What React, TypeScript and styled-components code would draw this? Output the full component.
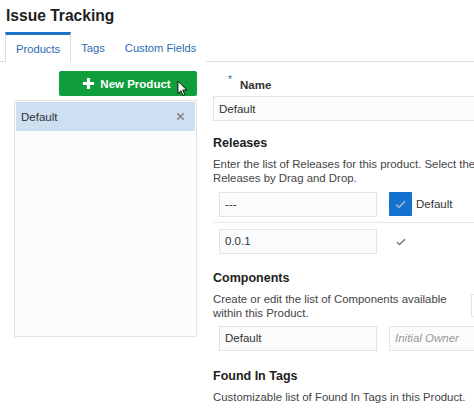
import React from 'react';
import styled, { createGlobalStyle } from 'styled-components';

const GlobalStyle = createGlobalStyle`
  html, body {
    margin: 0;
    padding: 0;
    background: #ffffff;
  }
  body {
    font-family: 'Liberation Sans', Arial, sans-serif;
    color: #333333;
  }
`;

const Page = () => {
  return (
    <Layout>
      <GlobalStyle />
      <Title>Issue Tracking</Title>

      <TabBar>
        <Tab $active>Products</Tab>
        <Tab>Tags</Tab>
        <Tab>Custom Fields</Tab>
      </TabBar>

      <Body>
        <LeftColumn>
          <NewButton>
            <PlusIcon viewBox="0 0 14 14">
              <path d="M7 1v12M1 7h12" stroke="#fff" strokeWidth="3.4" />
            </PlusIcon>
            New Product
            <Cursor viewBox="0 0 12 18">
              <path
                d="M1 1v13.5l3.2-3 2.2 5 2-0.9-2.1-4.9h4.4z"
                fill="#fff"
                stroke="#000"
                strokeWidth="1"
                strokeLinejoin="round"
              />
            </Cursor>
          </NewButton>

          <ProductList>
            <ProductItem $selected>
              <span>Default</span>
              <CloseIcon viewBox="0 0 10 10">
                <path d="M1.5 1.5l7 7M8.5 1.5l-7 7" stroke="#8a8a8a" strokeWidth="1.8" />
              </CloseIcon>
            </ProductItem>
          </ProductList>
        </LeftColumn>

        <RightColumn>
          <FieldLabel>
            <Required>*</Required>
            Name
          </FieldLabel>
          <TextInput $width="100%" $top={4}>
            Default
          </TextInput>

          <SectionTitle $top={14}>Releases</SectionTitle>
          <Description>
            <Line>Enter the list of Releases for this product. Select the</Line>
            <Line>Releases by Drag and Drop.</Line>
          </Description>

          <ReleaseRow $divider>
            <TextInput $width="158px">---</TextInput>
            <CheckBox>
              <svg viewBox="0 0 12 10" width="11" height="9">
                <path d="M1 5.2l3.2 3L11 1.5" fill="none" stroke="#9fb4cf" strokeWidth="1.7" />
              </svg>
            </CheckBox>
            <CheckText>Default</CheckText>
          </ReleaseRow>

          <ReleaseRow>
            <TextInput $width="158px">0.0.1</TextInput>
            <CheckSlot>
              <svg viewBox="0 0 12 10" width="10" height="8">
                <path d="M1 5.2l3.2 3L11 1.5" fill="none" stroke="#777" strokeWidth="1.8" />
              </svg>
            </CheckSlot>
          </ReleaseRow>

          <SectionTitle $top={17}>Components</SectionTitle>
          <DescriptionRow>
            <Description $width="250px">
              <Line>Create or edit the list of Components available</Line>
              <Line>within this Product.</Line>
            </Description>
            <EdgeBox />
          </DescriptionRow>

          <ReleaseRow>
            <TextInput $width="158px">Default</TextInput>
            <TextInput $width="110px" $placeholder>
              Initial Owner
            </TextInput>
          </ReleaseRow>

          <SectionTitle $top={18}>Found In Tags</SectionTitle>
          <Description>
            <Line>Customizable list of Found In Tags in this Product.</Line>
          </Description>
        </RightColumn>
      </Body>
    </Layout>
  );
};

const Layout = styled.div`
  width: 474px;
  height: 415px;
  overflow: hidden;
  display: flex;
  flex-direction: column;
`;

const Title = styled.h1`
  margin: 0;
  padding: 6px 0 0 6px;
  font-size: 15.6px;
  line-height: 20px;
  font-weight: 700;
  color: #222222;
`;

const TabBar = styled.div`
  display: flex;
  margin-top: 6px;
  padding-left: 5px;
  height: 29px;
  border-bottom: 1px solid #dddddd;
`;

const Tab = styled.div<{ $active?: boolean }>`
  display: flex;
  align-items: center;
  box-sizing: border-box;
  height: 30px;
  margin-bottom: -1px;
  padding: 0 ${(p) => (p.$active ? '10px' : '9px')};
  font-size: 11.2px;
  color: #2b6cb0;
  background: #ffffff;
  border: 1px solid ${(p) => (p.$active ? '#dddddd' : 'transparent')};
  border-top: ${(p) => (p.$active ? '3px solid #1f72c6' : '1px solid transparent')};
  border-bottom: none;
`;

const Body = styled.div`
  display: grid;
  grid-template-columns: 183px 300px;
  column-gap: 16px;
  padding-left: 14px;
`;

const LeftColumn = styled.div`
  display: flex;
  flex-direction: column;
  align-items: flex-end;
  padding-top: 9px;
`;

const NewButton = styled.div`
  position: relative;
  display: flex;
  align-items: center;
  justify-content: center;
  gap: 5px;
  width: 138px;
  height: 25px;
  padding-right: 3px;
  box-sizing: border-box;
  background: #0f9e3b;
  border-radius: 2px;
  color: #ffffff;
  font-size: 11.5px;
  font-weight: 700;
`;

const PlusIcon = styled.svg`
  width: 13px;
  height: 13px;
`;

const Cursor = styled.svg`
  position: absolute;
  left: 118px;
  top: 9px;
  width: 11px;
  height: 17px;
`;

const ProductList = styled.div`
  margin-top: 4px;
  width: 183px;
  height: 237px;
  box-sizing: border-box;
  border: 1px solid #e2e5e9;
  background: #fbfcfe;
  padding: 1px;
`;

const ProductItem = styled.div<{ $selected?: boolean }>`
  display: flex;
  align-items: center;
  justify-content: space-between;
  height: 29px;
  padding: 0 10px 0 5px;
  background: ${(p) => (p.$selected ? '#cde0f2' : 'transparent')};
  font-size: 11.5px;
  color: #333333;
`;

const CloseIcon = styled.svg`
  width: 9px;
  height: 9px;
`;

const RightColumn = styled.div`
  display: flex;
  flex-direction: column;
  padding-top: 16px;
`;

const FieldLabel = styled.div`
  position: relative;
  padding-left: 27px;
  height: 14px;
  line-height: 14px;
  font-size: 11.5px;
  font-weight: 700;
  color: #333333;
`;

const Required = styled.span`
  position: absolute;
  left: 15px;
  top: -5px;
  font-size: 10px;
  font-weight: 400;
  color: #2b6cb0;
`;

const TextInput = styled.div<{ $width: string; $top?: number; $placeholder?: boolean }>`
  display: flex;
  align-items: center;
  flex-shrink: 0;
  width: ${(p) => p.$width};
  height: 25px;
  margin-top: ${(p) => p.$top ?? 0}px;
  padding-left: 5px;
  box-sizing: border-box;
  background: #fafbfc;
  border: 1px solid #e1e4e7;
  font-size: 11.5px;
  font-style: ${(p) => (p.$placeholder ? 'italic' : 'normal')};
  color: ${(p) => (p.$placeholder ? '#999999' : '#333333')};
  white-space: nowrap;
`;

const SectionTitle = styled.h2<{ $top: number }>`
  margin: ${(p) => p.$top}px 0 0;
  font-size: 12.5px;
  line-height: 16px;
  font-weight: 700;
  color: #222222;
`;

const Description = styled.div<{ $width?: string }>`
  margin-top: 6px;
  width: ${(p) => p.$width ?? 'auto'};
  font-size: 11.4px;
  line-height: 14px;
  color: #444444;
`;

const DescriptionRow = styled.div`
  display: flex;
  align-items: flex-start;
  gap: 8px;
`;

const EdgeBox = styled.div`
  margin-top: 8px;
  width: 30px;
  height: 23px;
  box-sizing: border-box;
  border: 1px solid #e1e4e7;
  background: #ffffff;
`;

const Line = styled.div`
  white-space: nowrap;
`;

const ReleaseRow = styled.div<{ $divider?: boolean }>`
  display: flex;
  align-items: center;
  gap: 12px;
  height: 24px;
  margin-top: ${(p) => (p.$divider ? '7px' : '6px')};
  padding-left: 6px;
  padding-bottom: ${(p) => (p.$divider ? '6px' : '0')};
  border-bottom: ${(p) => (p.$divider ? '1px solid #e6e8ea' : 'none')};
`;

const CheckBox = styled.div`
  display: flex;
  align-items: center;
  justify-content: center;
  flex-shrink: 0;
  width: 23px;
  height: 24px;
  background: #1471cd;
  border-radius: 1px;
`;

const CheckSlot = styled.div`
  display: flex;
  align-items: center;
  justify-content: center;
  width: 23px;
  height: 24px;
  padding-top: 2px;
  box-sizing: border-box;
`;

const CheckText = styled.span`
  margin-left: -8px;
  font-size: 11.5px;
  color: #333333;
`;

export default Page;
